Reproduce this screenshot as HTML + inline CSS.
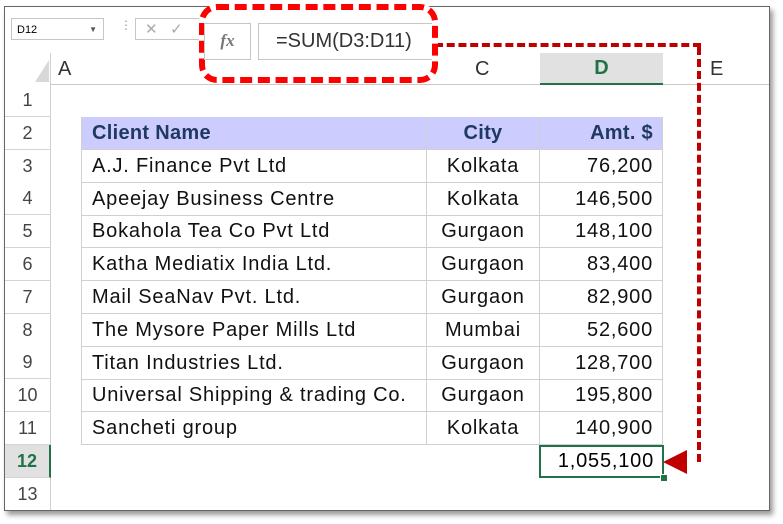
<!DOCTYPE html>
<html><head><style>
body{margin:0;width:783px;height:524px;background:#fff;position:relative;overflow:hidden;font-family:"Liberation Sans",sans-serif}
.frame{position:absolute;left:4px;top:6px;width:764px;height:503px;border:1px solid #666;box-shadow:3px 4px 5px #999;background:#fff;overflow:hidden}
.abs{position:absolute}
.rh{position:absolute;left:0;width:45px;text-align:center;color:#444;font-size:18px;border-bottom:1px solid #d4d4d4;background:#fff}
.cell{position:absolute;font-size:20px;letter-spacing:0.8px;color:#111;white-space:nowrap;box-sizing:border-box;border-right:1px solid #d0d0d0;border-bottom:1px solid #d0d0d0;line-height:32px;padding:0 10px}
</style></head><body>
<div class="frame">
 <div class="abs" style="left:6px;top:11px;width:93px;height:22px;border:1px solid #c6c6c6;font-size:11px;line-height:22px;padding-left:5px;box-sizing:border-box">D12<span style="position:absolute;right:6px;top:0;font-size:8px;color:#555">▼</span></div>
 <div class="abs" style="left:115px;top:11px;color:#999;font-size:12px">⋮</div>
 <div class="abs" style="left:130px;top:11px;width:70px;height:22px;border:1px solid #c6c6c6;color:#aaa;font-size:15px;line-height:22px;padding-left:9px;box-sizing:border-box">✕ &nbsp; ✓</div>
 <div class="abs" style="left:0;top:46px;width:764px;height:1px;background:#d4d4d4"></div>
 <div class="abs" style="left:0;top:46px;width:764px;height:31px;background:#fff;border-bottom:1px solid #c8c8c8"></div>
 <div class="abs" style="left:30px;top:53px;width:0;height:0;border-left:14px solid transparent;border-bottom:22px solid #d8d8d8"></div>
 <div class="abs" style="left:45px;top:46px;width:1px;height:460px;background:#d0d0d0"></div>
 <div class="abs" style="left:53px;top:51px;font-size:20px;color:#333">A</div>
 <div class="abs" style="left:470px;top:51px;font-size:20px;color:#333">C</div>
 <div class="abs" style="left:535px;top:46px;width:123px;height:30px;background:#e1e1e1;border-bottom:2px solid #217346;text-align:center;font-size:20px;font-weight:bold;color:#217346;line-height:30px">D</div>
 <div class="abs" style="left:705px;top:51px;font-size:20px;color:#333">E</div>
 <div id="rows"></div>
 <div class="abs" style="left:76px;top:110px;width:582px;height:33px;background:#ccccff"></div>
 <div id="tbl"></div>
 <div class="abs" style="left:534px;top:438px;width:125px;height:33px;border:2px solid #217346;box-sizing:border-box;font-size:20px;letter-spacing:0.8px;text-align:right;padding-right:8px;line-height:29px">1,055,100</div>
 <div class="abs" style="left:655px;top:467px;width:6px;height:6px;background:#217346;border:1px solid #fff"></div>
 <div class="abs" style="left:430px;top:36px;width:266px;border-top:4px dashed #c00000"></div>
 <div class="abs" style="left:692px;top:40px;height:415px;border-left:4px dashed #c00000"></div>
 <div class="abs" style="left:658px;top:443px;width:0;height:0;border-top:12px solid transparent;border-bottom:12px solid transparent;border-right:24px solid #c00000"></div>
</div>
<div class="abs" style="left:199px;top:4px;width:239px;height:79px;border:6px dashed #ff0000;border-radius:18px;box-sizing:border-box;background:#fff"></div>
<div class="abs" style="left:204px;top:23px;width:47px;height:37px;border:1px solid #c6c6c6;box-sizing:border-box;text-align:center;font-family:'Liberation Serif',serif;font-style:italic;font-weight:bold;color:#777;font-size:17px;line-height:34px">fx</div>
<div class="abs" style="left:258px;top:23px;width:174px;height:37px;border:1px solid #c6c6c6;border-right:none;box-sizing:border-box;font-size:20px;color:#333;line-height:35px;padding-left:17px">=SUM(D3:D11)</div>
<script>
var r=document.getElementById('rows'),h='';
for(var i=1;i<=13;i++){var t=77+(i-1)*32.8;h+='<div class="rh" style="top:'+t+'px;height:32px;line-height:32px;'+(i==12?'background:#e1e1e1;color:#217346;font-weight:bold;border-right:2px solid #217346;width:44px':'')+'">'+i+'</div>';}
r.outerHTML=h;
var d=[["Client Name","City","Amt. $"],["A.J. Finance Pvt Ltd","Kolkata","76,200"],["Apeejay Business Centre","Kolkata","146,500"],["Bokahola Tea Co Pvt Ltd","Gurgaon","148,100"],["Katha Mediatix India Ltd.","Gurgaon","83,400"],["Mail SeaNav Pvt. Ltd.","Gurgaon","82,900"],["The Mysore Paper Mills Ltd","Mumbai","52,600"],["Titan Industries Ltd.","Gurgaon","128,700"],["Universal Shipping & trading Co.","Gurgaon","195,800"],["Sancheti group","Kolkata","140,900"]];
h='';
for(var j=0;j<d.length;j++){var t=110+j*32.8,s=j==0?'font-weight:bold;color:#1f3864;letter-spacing:0.3px;':'';
h+='<div class="cell" style="'+s+'left:76px;top:'+t+'px;width:346px;height:33px;border-left:1px solid #d0d0d0">'+d[j][0].replace('&','&amp;')+'</div>';
h+='<div class="cell" style="'+s+'left:422px;top:'+t+'px;width:113px;height:33px;text-align:center;padding:0">'+d[j][1]+'</div>';
h+='<div class="cell" style="'+s+'left:535px;top:'+t+'px;width:123px;height:33px;text-align:right;padding-right:9px">'+d[j][2]+'</div>';}
document.getElementById('tbl').outerHTML=h;
</script>
</body></html>
